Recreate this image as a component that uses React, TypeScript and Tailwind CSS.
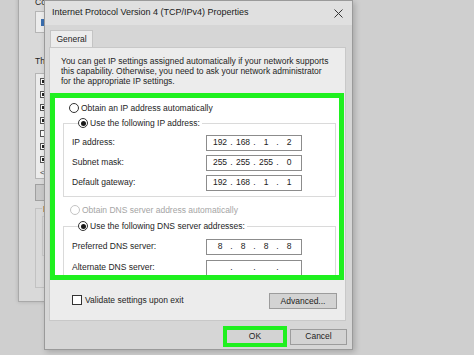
import React from "react";

function Radio({ checked, disabled }: { checked?: boolean; disabled?: boolean }) {
  return (
    <span
      className={`flex h-[10px] w-[10px] shrink-0 items-center justify-center rounded-full border bg-white ${
        disabled ? "border-[#c4c4c4]" : "border-[#333333]"
      }`}
    >
      {checked && <span className="h-[5px] w-[5px] rounded-full bg-[#1a1a1a]" />}
    </span>
  );
}

function IpBox({ parts }: { parts: string[] }) {
  return (
    <div className="flex h-[16px] w-[96px] items-center border border-[#8c8c8c] bg-white pl-[4px] text-[8.5px] text-[#222]">
      {parts.map((p, i) => (
        <React.Fragment key={i}>
          <span className="w-[18px] text-center">{p}</span>
          {i < 3 && <span className="w-[5px] text-center">.</span>}
        </React.Fragment>
      ))}
    </div>
  );
}

function FieldRow({ label, parts }: { label: string; parts: string[] }) {
  return (
    <div className="flex h-[17px] items-center justify-between">
      <span>{label}</span>
      <IpBox parts={parts} />
    </div>
  );
}

function BackWindow() {
  const rows = [true, true, true, true, false, true, true];
  return (
    <div className="absolute left-[18px] top-[-10px] flex h-[312px] w-[160px] flex-col whitespace-nowrap border border-[#a9a9a9] bg-[#d9d9d9] pl-[16px] pt-[6px] text-[8.5px] leading-[10px] text-[#222] shadow-[0_0_4px_rgba(0,0,0,0.15)]">
      <div>Connect using:</div>
      <div className="mt-[4px] flex h-[22px] w-[120px] items-center border border-[#b5b5b5] bg-[#ececec] pl-[5px]">
        <span className="h-[7px] w-[5px] bg-[#3a6fb0]" />
      </div>
      <div className="mt-[23px]">This connection uses the following items:</div>
      <div className="mt-[7px] flex h-[106px] w-[120px] flex-col border border-[#b5b5b5] bg-[#ececec] pl-[4px] pt-[1px]">
        {rows.map((c, i) => (
          <div key={i} className="flex h-[13px] items-center">
            <span className="flex h-[7px] w-[7px] items-center justify-center border border-[#555] bg-white">
              {c && <span className="h-[3px] w-[3px] bg-[#222]" />}
            </span>
          </div>
        ))}
        <div className="mt-[2px] text-[8px] text-[#444]">&lt;</div>
      </div>
      <div className="mt-[5px] h-[17px] w-[60px] border border-[#a0a0a0] bg-[#c8c8c8]" />
      <div className="mt-[7px] h-[80px] w-[120px] border border-[#c2c2c2] pl-[6px]">
        <div className="mt-[-5px] w-fit bg-[#d9d9d9] px-[1px]">Description</div>
        <div className="mt-[2px] h-[40px] w-[100px] border border-[#c8c8c8]" />
      </div>
    </div>
  );
}

export default function App() {
  return (
    <div className="relative h-[355px] w-[474px] overflow-hidden bg-[#cfcfcf] font-['Liberation_Sans',Arial,sans-serif] text-[#1e1e1e]">
      <BackWindow />
      <div className="absolute left-[44px] top-0 flex h-[350px] w-[309px] flex-col border border-[#9a9a9a] bg-[#d6d6d6] shadow-[2px_2px_6px_rgba(0,0,0,0.2)]">
        {/* title bar */}
        <div className="flex h-[24px] shrink-0 items-center justify-between bg-[#e0e0e0] pl-[7px] pr-[9px]">
          <span className="text-[9px] text-[#1a1a1a]">Internet Protocol Version 4 (TCP/IPv4) Properties</span>
          <svg width="9" height="9" viewBox="0 0 9 9" className="text-[#333]">
            <path d="M0.5 0.5 L8.5 8.5 M8.5 0.5 L0.5 8.5" stroke="currentColor" strokeWidth="1" fill="none" />
          </svg>
        </div>
        {/* tabs */}
        <div className="flex h-[22px] shrink-0 items-end pl-[5px]">
          <div className="flex h-[17px] w-[43px] items-center justify-center border border-b-0 border-[#c4c4c4] bg-[#ececec] text-[8.5px]">
            General
          </div>
        </div>
        {/* panel */}
        <div className="ml-[4px] mr-[6px] flex h-[274px] shrink-0 flex-col border border-[#c8c8c8] bg-[#ececec] text-[8.5px]">
          <div className="px-[11px] pt-[8px] leading-[10px]">
            <div>You can get IP settings assigned automatically if your network supports</div>
            <div>this capability. Otherwise, you need to ask your network administrator</div>
            <div>for the appropriate IP settings.</div>
          </div>
          {/* green highlight */}
          <div className="mr-[1px] mt-[7px] h-[187px] shrink-0 overflow-hidden border-[5px] border-[#1ff01f] bg-white">
            <div className="flex h-[17px] items-center gap-[2px] pl-[14px] pt-[3px]">
              <Radio />
              <span>Obtain an IP address automatically</span>
            </div>
            <fieldset className="ml-[8px] mr-[3px] border border-[#dadada] pb-[5px] pl-[8px] pr-[33px]">
              <legend className="ml-[6px] flex h-[16px] items-center gap-[2px] pr-[2px]">
                <Radio checked />
                <span>Use the following IP address:</span>
              </legend>
              <div className="mt-[3px] flex flex-col gap-[3px]">
                <FieldRow label="IP address:" parts={["192", "168", "1", "2"]} />
                <FieldRow label="Subnet mask:" parts={["255", "255", "255", "0"]} />
                <FieldRow label="Default gateway:" parts={["192", "168", "1", "1"]} />
              </div>
            </fieldset>
            <div className="mt-[5px] flex h-[16px] items-center gap-[2px] pl-[15px] text-[#a5a5a5]">
              <Radio disabled />
              <span>Obtain DNS server address automatically</span>
            </div>
            <fieldset className="ml-[8px] mr-[3px] border border-[#dadada] pb-[5px] pl-[8px] pr-[33px]">
              <legend className="ml-[6px] flex h-[16px] items-center gap-[2px] pr-[2px]">
                <Radio checked />
                <span>Use the following DNS server addresses:</span>
              </legend>
              <div className="mt-[4px] flex flex-col gap-[4px]">
                <FieldRow label="Preferred DNS server:" parts={["8", "8", "8", "8"]} />
                <FieldRow label="Alternate DNS server:" parts={["", "", "", ""]} />
              </div>
            </fieldset>
          </div>
          {/* validate + advanced */}
          <div className="mt-[13px] flex items-start justify-between pl-[22px] pr-[8px]">
            <div className="mt-[1px] flex items-center gap-[3px]">
              <span className="h-[10px] w-[10px] border border-[#333] bg-white" />
              <span>Validate settings upon exit</span>
            </div>
            <div className="flex h-[16px] w-[68px] items-center justify-center border border-[#9c9c9c] bg-[#d3d3d3]">
              Advanced...
            </div>
          </div>
        </div>
        {/* bottom buttons */}
        <div className="mt-[5px] flex items-center justify-end gap-[3px] pr-[5px] text-[8.5px]">
          <div className="border-[4px] border-[#1ff01f]">
            <div className="flex h-[13px] w-[56px] items-center justify-center bg-[#d3d3d3]">OK</div>
          </div>
          <div className="flex h-[16px] w-[57px] items-center justify-center border border-[#9c9c9c] bg-[#d3d3d3]">
            Cancel
          </div>
        </div>
      </div>
    </div>
  );
}
